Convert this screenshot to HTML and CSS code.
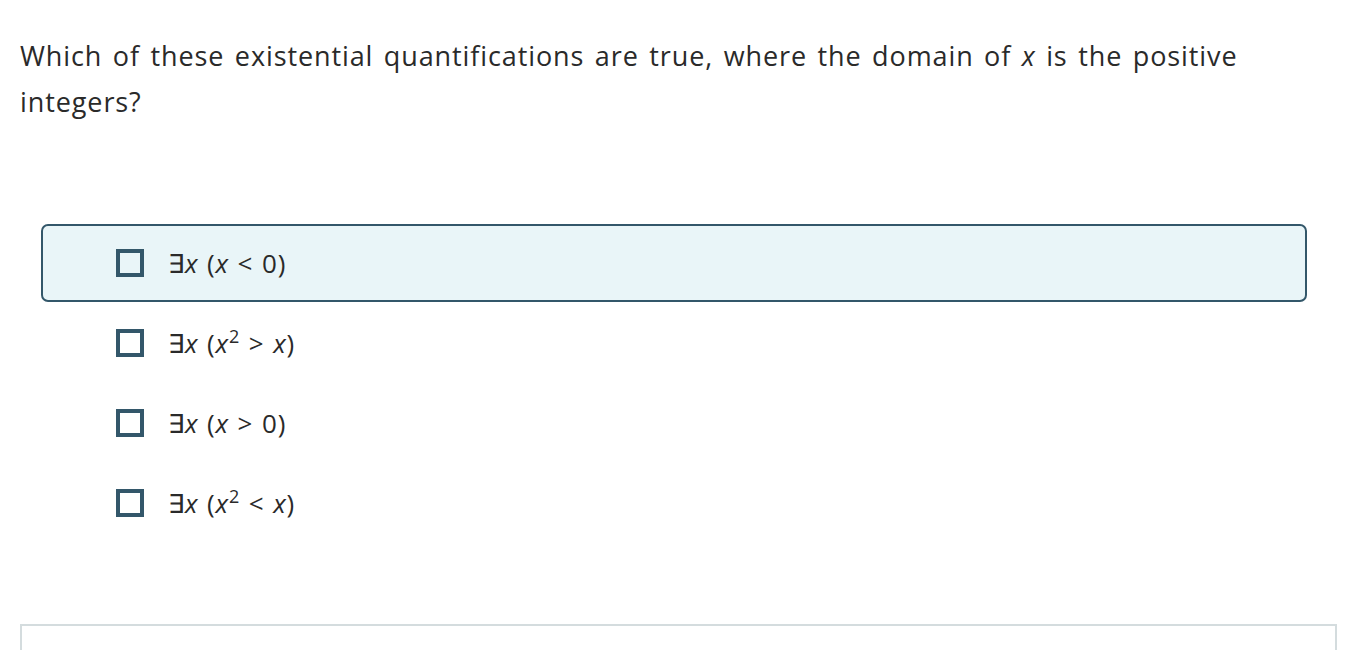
FILE: index.html
```html
<!DOCTYPE html>
<html lang="en">
<head>
<meta charset="utf-8">
<title>Question</title>
<link rel="stylesheet" href="styles.css">
</head>
<body>
<div class="page">
  <p class="question">Which of these existential quantifications are true, where the domain of <i>x</i> is the positive integers?</p>
  <ul class="options">
    <li class="option active"><span class="box"></span><span class="label">∃<i>x</i> (<i>x</i> &lt; 0)</span></li>
    <li class="option"><span class="box"></span><span class="label">∃<i>x</i> (<i>x</i><sup>2</sup> &gt; <i>x</i>)</span></li>
    <li class="option"><span class="box"></span><span class="label">∃<i>x</i> (<i>x</i> &gt; 0)</span></li>
    <li class="option"><span class="box"></span><span class="label">∃<i>x</i> (<i>x</i><sup>2</sup> &lt; <i>x</i>)</span></li>
  </ul>
  <div class="panel"></div>
</div>
</body>
</html>
```
FILE: styles.css
```css
html, body { margin: 0; padding: 0; background: #fff; }
body { font-family: "Open Sans", "Lato", sans-serif; color: #2a2a2a; overflow: hidden; }
.page { padding: 0 15px 0 20px; height: 650px; box-sizing: border-box; }
.question { margin: 0; padding-top: 33px; font-size: 27px; line-height: 46px; width: 1260px; letter-spacing: 0.9px; word-spacing: 2.6px; }
.question i { font-style: italic; }
.options { list-style: none; margin: 99px 0 0 0; padding: 0 30px 0 21px; }
.option { height: 78px; margin-bottom: 2px; display: flex; align-items: center; padding-left: 73px; border: 2px solid transparent; border-radius: 7px; box-sizing: border-box; }
.option.active { background: #e9f5f8; border-color: #33576a; }
.box { width: 28px; height: 28px; box-sizing: border-box; border: 4px solid #33576a; background: transparent; flex: none; }
.label { margin-left: 24px; font-size: 26px; line-height: 1; letter-spacing: 0.9px; word-spacing: 1px; }
.label sup { font-size: 18px; line-height: 0; vertical-align: 0; position: relative; top: -10px; }
.panel { margin-top: 82px; height: 40px; border: 2px solid #d4dcde; border-bottom: none; width: 1317px; box-sizing: border-box; }
```
